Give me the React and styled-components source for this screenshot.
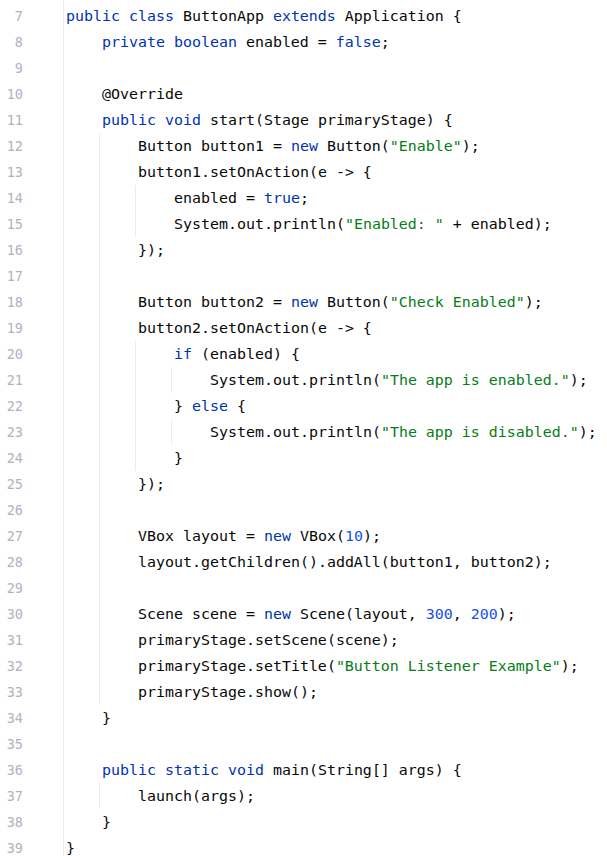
import React from "react";
import styled, { createGlobalStyle } from "styled-components";

const Global = createGlobalStyle`
  html, body { margin: 0; padding: 0; background: #ffffff; }
`;

const Editor = styled.div`
  display: grid;
  grid-template-columns: 64px 1fr;
  width: 607px;
  min-height: 856px;
  background: #ffffff;
  font-family: "DejaVu Sans Mono", "Liberation Mono", monospace;
`;

const Gutter = styled.div`
  border-right: 1px solid #ebecf0;
  padding-top: 3px;
`;

const LineNo = styled.div`
  height: 26px;
  line-height: 26px;
  box-sizing: border-box;
  padding-right: 40px;
  text-align: right;
  font-size: 13.5px;
  color: #aeb3c2;
`;

const Code = styled.div`
  padding-top: 3px;
  padding-left: 2px;
`;

const Line = styled.div`
  display: flex;
  height: 26px;
  line-height: 26px;
  font-size: 14.95px;
  color: #080808;
  white-space: pre;
`;

const Indent = styled.span`
  position: relative;
  flex: 0 0 36px;
  height: 26px;
  &::before {
    content: "";
    display: ${(p) => (p.$guide ? "block" : "none")};
    position: absolute;
    left: -3px;
    top: 0;
    bottom: 0;
    width: 1px;
    background: #ebecf0;
  }
`;

const Tok = styled.span`
  color: ${(p) =>
    p.$kind === "kw"
      ? "#0033b3"
      : p.$kind === "str"
      ? "#067d17"
      : p.$kind === "num"
      ? "#1750eb"
      : "#080808"};
`;

const KEYWORDS = new Set([
  "public", "class", "extends", "private", "boolean", "false", "void",
  "new", "true", "if", "else", "static",
]);

const LINES = [
  [0, "public class ButtonApp extends Application {"],
  [1, "private boolean enabled = false;"],
  [1, ""],
  [1, "@Override"],
  [1, "public void start(Stage primaryStage) {"],
  [2, 'Button button1 = new Button("Enable");'],
  [2, "button1.setOnAction(e -> {"],
  [3, "enabled = true;"],
  [3, 'System.out.println("Enabled: " + enabled);'],
  [2, "});"],
  [2, ""],
  [2, 'Button button2 = new Button("Check Enabled");'],
  [2, "button2.setOnAction(e -> {"],
  [3, "if (enabled) {"],
  [4, 'System.out.println("The app is enabled.");'],
  [3, "} else {"],
  [4, 'System.out.println("The app is disabled.");'],
  [3, "}"],
  [2, "});"],
  [2, ""],
  [2, "VBox layout = new VBox(10);"],
  [2, "layout.getChildren().addAll(button1, button2);"],
  [2, ""],
  [2, "Scene scene = new Scene(layout, 300, 200);"],
  [2, "primaryStage.setScene(scene);"],
  [2, 'primaryStage.setTitle("Button Listener Example");'],
  [2, "primaryStage.show();"],
  [1, "}"],
  [0, ""],
  [1, "public static void main(String[] args) {"],
  [2, "launch(args);"],
  [1, "}"],
  [0, "}"],
];

function tokenize(text) {
  const re = /("[^"]*")|([A-Za-z_@][A-Za-z0-9_]*)|(\d+)|([^"A-Za-z_@\d]+)/g;
  const out = [];
  let m;
  while ((m = re.exec(text))) {
    if (m[1]) out.push(["str", m[1]]);
    else if (m[2]) out.push([KEYWORDS.has(m[2]) ? "kw" : "id", m[2]]);
    else if (m[3]) out.push(["num", m[3]]);
    else out.push(["plain", m[4]]);
  }
  return out;
}

export default function App() {
  return (
    <>
      <Global />
      <Editor>
        <Gutter>
          {LINES.map((_, i) => (
            <LineNo key={i}>{i + 7}</LineNo>
          ))}
        </Gutter>
        <Code>
          {LINES.map(([indent, text], i) => (
            <Line key={i}>
              {Array.from({ length: indent }).map((_, k) => (
                <Indent key={k} $guide={k >= 1} />
              ))}
              {tokenize(text).map(([kind, t], j) => (
                <Tok key={j} $kind={kind}>
                  {t}
                </Tok>
              ))}
            </Line>
          ))}
        </Code>
      </Editor>
    </>
  );
}
